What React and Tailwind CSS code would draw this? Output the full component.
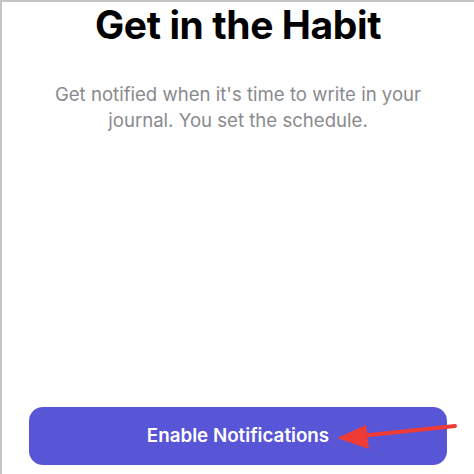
const App = () => {
  return (
    <div
      className="relative flex h-[474px] w-[474px] flex-col overflow-hidden border-l-2 border-t-2 border-[#c4c4c4] bg-white"
      style={{ fontFamily: "Inter, 'Liberation Sans', sans-serif" }}
    >
      <h1 className="mt-[1px] text-center text-[39px] font-bold leading-[44px] tracking-[-0.4px] text-black">
        Get in the Habit
      </h1>
      <p className="mx-auto mt-[34px] w-[410px] text-center text-[18.6px] leading-[26px] text-[#8a8a8e]">
        Get notified when it's time to write in your journal. You set the schedule.
      </p>

      <div className="mt-auto px-[27px] pb-[9px]">
        <button className="flex h-[58px] w-full items-center justify-center rounded-[14px] bg-[#5856d6] text-[18.8px] font-semibold text-white">
          Enable Notifications
        </button>
      </div>

      <svg className="absolute left-[330px] top-[415px]" width="130" height="40" viewBox="0 0 130 40">
        <line x1="123" y1="9" x2="28" y2="19" stroke="#ef3b36" strokeWidth="4" strokeLinecap="round" />
        <polygon points="5,21 34,8 37,32" fill="#ef3b36" />
      </svg>
    </div>
  );
};

export default App;
